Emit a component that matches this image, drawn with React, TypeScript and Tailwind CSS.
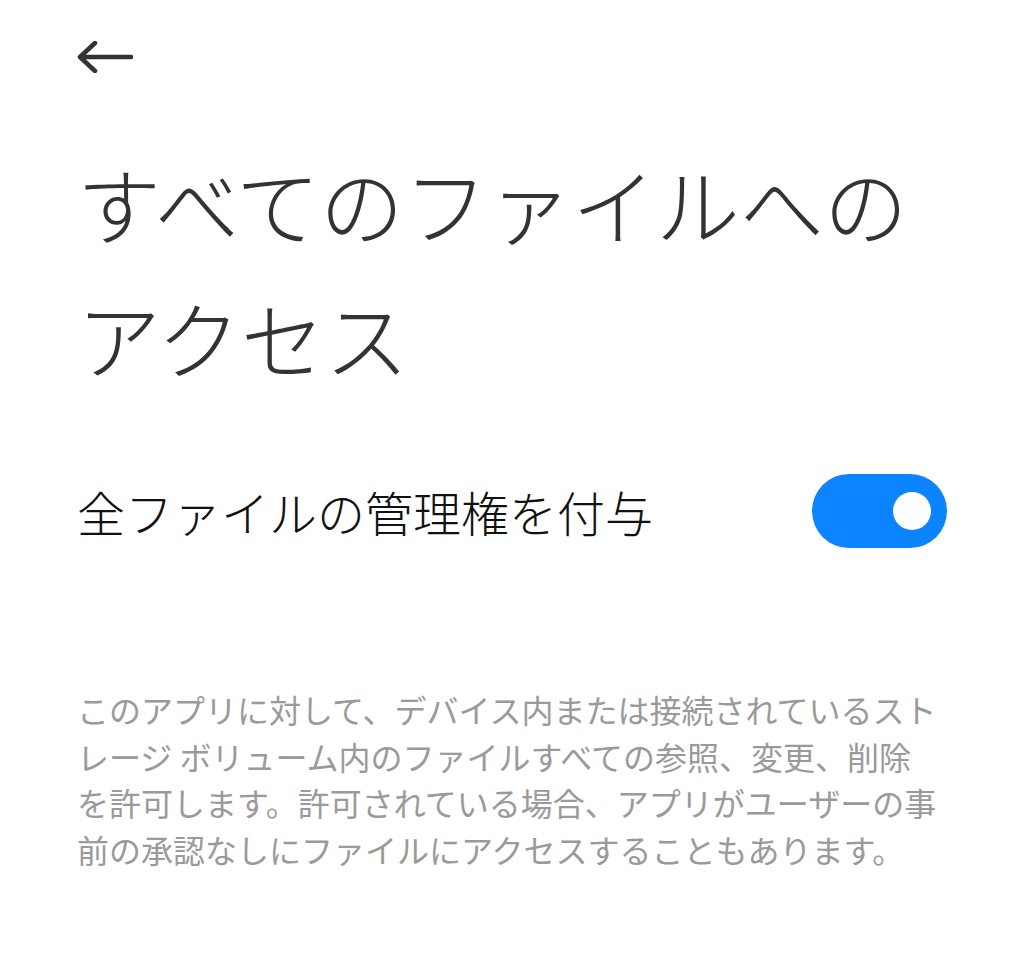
import React, { useState } from 'react';

export default function App() {
  const [granted, setGranted] = useState(true);

  return (
    <div className="min-h-screen w-full bg-white font-['Noto_Sans_CJK_JP','Noto_Sans',sans-serif]">
      {/* Back */}
      <div className="px-[77px] pt-[30px] h-[56px] flex items-center">
        <svg width="56" height="32" viewBox="0 0 56 32" fill="none" className="mt-[28px]">
          <path d="M54 16H4M18 2L3 16l15 14" stroke="#333" strokeWidth="4.5" strokeLinecap="round" strokeLinejoin="round" />
        </svg>
      </div>

      {/* Title */}
      <h1 className="px-[77px] mt-[80px] text-[84px] leading-[134px] text-[#333] font-light">
        すべてのファイルへの
        <br />
        アクセス
      </h1>

      {/* Setting row */}
      <div className="px-[77px] mt-[70px] flex items-center justify-between">
        <span className="text-[48px] leading-[60px] text-[#111] font-light">全ファイルの管理権を付与</span>
        <button
          onClick={() => setGranted(!granted)}
          className={`w-[135px] h-[74px] rounded-full flex items-center px-[16px] ${granted ? 'bg-[#0d84ff] justify-end' : 'bg-[#e5e5e5] justify-start'}`}
        >
          <span className="block w-[38px] h-[38px] rounded-full bg-white" />
        </button>
      </div>

      {/* Description */}
      <p className="px-[77px] mt-[138px] text-[32px] leading-[46.5px] text-[#9a9a9a] whitespace-nowrap">
        このアプリに対して、デバイス内または接続されているスト
        <br />
        レージ ボリューム内のファイルすべての参照、変更、削除
        <br />
        を許可します。許可されている場合、アプリがユーザーの事
        <br />
        前の承認なしにファイルにアクセスすることもあります。
      </p>
    </div>
  );
}
